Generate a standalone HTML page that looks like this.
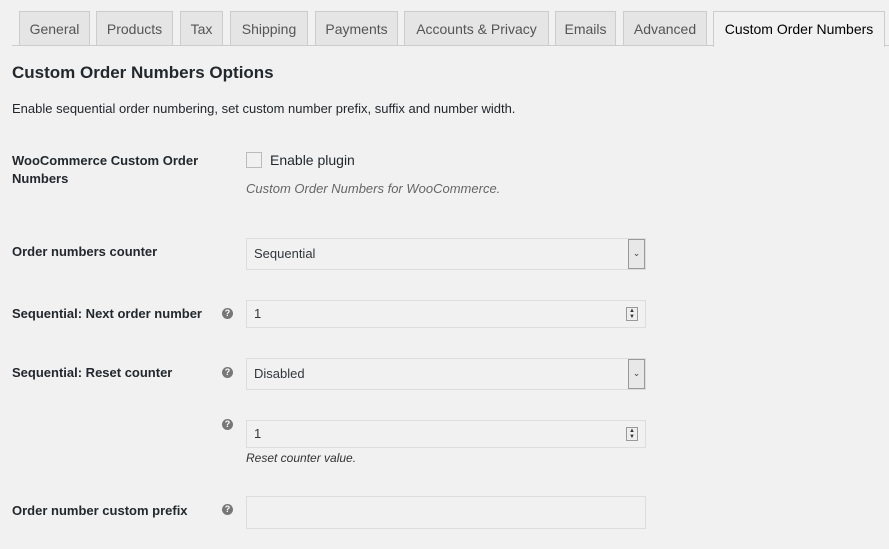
<!DOCTYPE html>
<html><head><style>
body{margin:0;width:889px;height:549px;background:#f1f1f1;font-family:"Liberation Sans",sans-serif;color:#23282d;overflow:hidden;position:relative;font-size:13px}
.a{position:absolute}
.tab{position:absolute;top:11px;height:34px;background:#e5e5e5;border:1px solid #ccc;border-bottom:none;font-size:14px;color:#555;line-height:34px;text-align:center;box-sizing:border-box}
.line{position:absolute;left:12px;right:0;top:45px;border-top:1px solid #ccc}
.lab{position:absolute;left:12px;font-weight:bold;font-size:13px;color:#23282d;line-height:18px}
.inp{position:absolute;left:246px;width:400px;background:#f1f1f1;border:1px solid #ddd;box-sizing:border-box;font-size:13px;color:#32373c;padding-left:7px}
.q{position:absolute;left:222px;width:11px;height:11px;border-radius:50%;background:#777;color:#fff;font-size:9px;font-weight:bold;text-align:center;line-height:11px}
.sel-btn{position:absolute;right:0;top:0;width:17px;height:30px;border:1px solid #999;box-sizing:border-box;background:#e8e8e8;font-size:9px;text-align:center;line-height:26px;color:#444}
.spin{position:absolute;right:7px;top:6px;width:12px;height:14px;border:1px solid #999;box-sizing:border-box;background:#eee;font-size:6px;line-height:6px;text-align:center}
</style></head><body>
<div class="line"></div>
<div class="tab" style="left:19px;width:71px">General</div>
<div class="tab" style="left:96px;width:77px">Products</div>
<div class="tab" style="left:180px;width:43px">Tax</div>
<div class="tab" style="left:230px;width:78px">Shipping</div>
<div class="tab" style="left:315px;width:83px">Payments</div>
<div class="tab" style="left:404px;width:145px">Accounts &amp; Privacy</div>
<div class="tab" style="left:555px;width:61px">Emails</div>
<div class="tab" style="left:623px;width:84px">Advanced</div>
<div class="tab" style="left:713px;width:172px;height:36px;background:#f1f1f1;color:#000">Custom Order Numbers</div>
<div class="a" style="left:12px;top:63px;font-size:17px;font-weight:bold">Custom Order Numbers Options</div>
<div class="a" style="left:12px;top:101px;font-size:13px">Enable sequential order numbering, set custom number prefix, suffix and number width.</div>
<div class="lab" style="top:152px">WooCommerce Custom Order<br>Numbers</div>
<div class="a" style="left:246px;top:152px;width:14px;height:14px;border:1px solid #bbb;background:#f1f1f1"></div>
<div class="a" style="left:270px;top:152px;font-size:14px">Enable plugin</div>
<div class="a" style="left:246px;top:181px;font-style:italic;color:#666">Custom Order Numbers for WooCommerce.</div>
<div class="lab" style="top:243px">Order numbers counter</div>
<div class="inp" style="top:238px;height:32px;line-height:30px">Sequential<div class="sel-btn">&#8964;</div></div>
<div class="lab" style="top:305px">Sequential: Next order number</div>
<div class="q" style="top:308px">?</div>
<div class="inp" style="top:300px;height:28px;line-height:26px">1<div class="spin">▲<br>▼</div></div>
<div class="lab" style="top:364px">Sequential: Reset counter</div>
<div class="q" style="top:367px">?</div>
<div class="inp" style="top:358px;height:32px;line-height:30px">Disabled<div class="sel-btn">&#8964;</div></div>
<div class="q" style="top:419px">?</div>
<div class="inp" style="top:420px;height:28px;line-height:26px">1<div class="spin">▲<br>▼</div></div>
<div class="a" style="left:246px;top:451px;font-style:italic;font-size:12px;color:#333">Reset counter value.</div>
<div class="lab" style="top:502px">Order number custom prefix</div>
<div class="q" style="top:504px">?</div>
<div class="inp" style="top:496px;height:33px"></div>
</body></html>
